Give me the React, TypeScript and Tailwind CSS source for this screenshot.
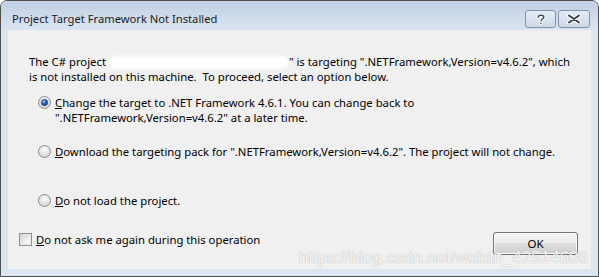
import React from 'react';

function Radio({ checked, id }: { checked?: boolean; id: string }) {
  return (
    <svg width="13" height="13" viewBox="0 0 13 13" className="shrink-0">
      <defs>
        <radialGradient id={`rg-${id}`} cx="50%" cy="35%" r="70%">
          <stop offset="0%" stopColor="#fdfdfd" />
          <stop offset="100%" stopColor="#cfcfcf" />
        </radialGradient>
        <radialGradient id={`dot-${id}`} cx="40%" cy="35%" r="65%">
          <stop offset="0%" stopColor="#9fc4f0" />
          <stop offset="55%" stopColor="#2a5db5" />
          <stop offset="100%" stopColor="#10357a" />
        </radialGradient>
      </defs>
      <circle cx="6.5" cy="6.5" r="6" fill={`url(#rg-${id})`} stroke="#8a8c8e" strokeWidth="1" />
      {checked && <circle cx="6.5" cy="6.5" r="3.2" fill={`url(#dot-${id})`} stroke="#1c3f7d" strokeWidth="0.5" />}
    </svg>
  );
}

function Option({
  id,
  checked,
  accel,
  children,
  className,
}: {
  id: string;
  checked?: boolean;
  accel: string;
  children: React.ReactNode;
  className?: string;
}) {
  return (
    <div className={`flex items-start gap-[4px] pl-[9px] ${className ?? ''}`}>
      <div className="pt-[1px]">
        <Radio id={id} checked={checked} />
      </div>
      <div>
        <u className="no-underline border-b border-black leading-[11px] inline-block">{accel}</u>
        {children}
      </div>
    </div>
  );
}

export default function App() {
  return (
    <div className="w-[599px] h-[277px] overflow-hidden bg-white">
      <div className="relative w-[599px] h-[277px] border border-[#4f4f4f] rounded-t-[7px] bg-[#dbe6f3] font-['Noto_Sans',sans-serif] text-[11.3px] leading-[15px] text-black flex flex-col">
        {/* title bar */}
        <div className="h-[29px] pt-[6px] pl-[11px] pr-[8px] flex items-center justify-between rounded-t-[6px] bg-[linear-gradient(#bfcee1,#d3dfee_70%,#dae5f2)]">
          <span className="text-[11.2px] text-[#1b1b1b]">Project Target Framework Not Installed</span>
          <div className="flex gap-[2px]">
            <div className="w-[31px] h-[18px] rounded-[3px] border border-[#8592a8] bg-[linear-gradient(#e4ebf4,#ced9e8)] flex items-center justify-center">
              <svg width="10" height="12" viewBox="0 0 10 12">
                <path d="M2.2 4.2 C2.2 1.6 7.8 1.6 7.8 4.2 C7.8 6 5 6 5 7.8" fill="none" stroke="#fff" strokeWidth="3.2" strokeLinecap="round" />
                <circle cx="5" cy="10.3" r="1.6" fill="#fff" />
                <path d="M2.2 4.2 C2.2 1.6 7.8 1.6 7.8 4.2 C7.8 6 5 6 5 7.8" fill="none" stroke="#3a4250" strokeWidth="1.4" strokeLinecap="round" />
                <circle cx="5" cy="10.3" r="0.8" fill="#3a4250" />
              </svg>
            </div>
            <div className="w-[32px] h-[18px] rounded-[3px] border border-[#8592a8] bg-[linear-gradient(#e4ebf4,#ced9e8)] flex items-center justify-center">
              <svg width="14" height="10" viewBox="0 0 14 10">
                <path d="M2 1.5 L12 8.5 M12 1.5 L2 8.5" stroke="#fff" strokeWidth="4" strokeLinecap="round" />
                <path d="M2 1.5 L12 8.5 M12 1.5 L2 8.5" stroke="#3a4250" strokeWidth="2" strokeLinecap="round" />
              </svg>
            </div>
          </div>
        </div>

        {/* content */}
        <div className="mx-[7px] h-[239px] bg-[#f0f0f0] flex flex-col pt-[24px] pl-[21px] pr-[13px]">
          <p>
            The C# project{' '}
            <span className="inline-block align-middle w-[180px] h-[13px] bg-white rounded-full blur-[1.5px]" />
            " is targeting ".NETFramework,Version=v4.6.2", which
            <br />
            is not installed on this machine.&nbsp; To proceed, select an option below.
          </p>

          <Option id="a" checked accel="C" className="mt-[11px]">
            hange the target to .NET Framework 4.6.1. You can change back to
            <br />
            ".NETFramework,Version=v4.6.2" at a later time.
          </Option>
          <Option id="b" accel="D" className="mt-[19px]">
            ownload the targeting pack for ".NETFramework,Version=v4.6.2". The project will not change.
          </Option>
          <Option id="c" accel="D" className="mt-[34px]">
            o not load the project.
          </Option>

          <div className="mt-[24px] -ml-[10px] flex items-start justify-between">
            <div className="flex items-start gap-[4px]">
              <div className="mt-[1px] w-[13px] h-[13px] border border-[#8e8f8f] bg-[linear-gradient(135deg,#d6d6d6,#f6f6f6)] p-[2px]">
                <div className="w-full h-full bg-[linear-gradient(135deg,#dcdcdc,#fbfbfb)]" />
              </div>
              <span>
                <u className="no-underline border-b border-black leading-[11px] inline-block">D</u>o not ask me again during this operation
              </span>
            </div>
            <button className="w-[85px] h-[23px] rounded-[3px] border border-[#707070] bg-[linear-gradient(#f2f2f2_0%,#ebebeb_45%,#dddddd_50%,#cfcfcf_100%)] shadow-[inset_0_0_0_1px_#fcfcfc] text-[11.5px] text-black leading-none">
              OK
            </button>
          </div>
        </div>

        {/* watermark */}
        <div className="absolute right-[10px] bottom-[10px] font-['Liberation_Sans',Arial,sans-serif] text-[17px] leading-none text-white/90 [text-shadow:0_0_1px_rgba(90,90,90,0.6)] pointer-events-none">
          https://blog.csdn.net/weixin_42514606
        </div>
      </div>
    </div>
  );
}
